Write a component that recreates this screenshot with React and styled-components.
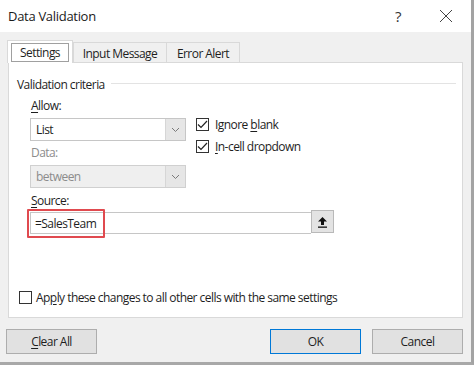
import React from "react";
import styled, { createGlobalStyle } from "styled-components";

const Global = createGlobalStyle`
  html, body { margin: 0; padding: 0; background: #ffffff; }
  body { font-family: "Open Sans", "Noto Sans", sans-serif; color: #1e1e1e; letter-spacing: -0.55px; }
  * { box-sizing: border-box; }
`;

const Window = styled.div`
  width: 474px;
  height: 365px;
  display: flex;
  flex-direction: column;
  background: #f0f0f0;
  border-right: 3px solid #a3a3a3;
  border-bottom: 3px solid #a8a8a8;
  overflow: hidden;
`;

const TitleBar = styled.div`
  height: 32px;
  flex: none;
  background: #ffffff;
  display: flex;
  align-items: center;
  padding-left: 8px;
`;

const Title = styled.div`
  flex: 1;
  font-size: 13px;
  letter-spacing: -0.3px;
  color: #1a1a1a;
`;

const TitleButton = styled.div`
  width: ${(p) => p.$w}px;
  height: 32px;
  display: flex;
  align-items: center;
  justify-content: center;
  color: #333;
  font-size: 15px;
`;

const Body = styled.div`
  flex: 1;
  display: flex;
  flex-direction: column;
  padding: 8px 8px 0 7px;
`;

const Tabs = styled.div`
  display: flex;
  align-items: flex-end;
  height: 23px;
`;

const Tab = styled.div`
  height: ${(p) => (p.$active ? 23 : 21)}px;
  padding: ${(p) => (p.$active ? "2px 3px 1px" : "0")};
  background: ${(p) => (p.$active ? "#ffffff" : "#f0f0f0")};
  border: 1px solid #d9d9d9;
  border-bottom: none;
  margin-right: ${(p) => (p.$active ? 0 : -1)}px;
  position: relative;
  z-index: ${(p) => (p.$active ? 2 : 1)};
  display: flex;
  align-items: center;
  justify-content: center;
  font-size: 12px;
  color: #1e1e1e;
  width: ${(p) => p.$w}px;
`;

const Focus = styled.div`
  width: 100%;
  height: 100%;
  border: 1px solid #a0a0a0;
  display: flex;
  align-items: center;
  justify-content: center;
`;

const Panel = styled.div`
  position: relative;
  margin-left: 1px;
  height: 256px;
  background: #ffffff;
  border: 1px solid #d9d9d9;
  margin-top: -1px;
  z-index: 1;
  padding: 13px 0 0 8px;
  display: flex;
  flex-direction: column;
`;

const Group = styled.div`
  display: flex;
  align-items: center;
  gap: 6px;
  font-size: 12px;
  height: 16px;
  padding-right: 6px;
  &::after {
    content: "";
    flex: 1;
    height: 1px;
    margin-top: -1px;
    background: #e3e3e3;
  }
`;

const Criteria = styled.div`
  display: flex;
  gap: 10px;
  padding-left: 13px;
  margin-top: ${(p) => p.$mt}px;
`;

const Column = styled.div`
  display: flex;
  flex-direction: column;
  width: 156px;
`;

const Label = styled.div`
  font-size: 12px;
  height: 16px;
  line-height: 16px;
  margin: ${(p) => p.$m || "0"};
  color: ${(p) => (p.$disabled ? "#8c8c8c" : "#1e1e1e")};
  padding-left: 1px;
  u { text-decoration: underline; text-underline-offset: 2px; }
`;

const Select = styled.div`
  height: 23px;
  margin-top: 4px;
  border: 1px solid ${(p) => (p.$disabled ? "#d0d0d0" : "#c6c6c6")};
  background: ${(p) => (p.$disabled ? "#efefef" : "#ffffff")};
  display: flex;
  align-items: stretch;
  font-size: 12px;
  color: ${(p) => (p.$disabled ? "#8c8c8c" : "#1e1e1e")};
`;

const SelectText = styled.div`
  flex: 1;
  display: flex;
  align-items: center;
  padding-left: 5px;
`;

const Arrow = styled.div`
  width: 20px;
  background: #e6e6e6;
  border-left: 1px solid #d6d6d6;
  display: flex;
  align-items: center;
  justify-content: center;
`;

const Checks = styled.div`
  display: flex;
  flex-direction: column;
  gap: 8px;
  padding-top: 19px;
`;

const CheckRow = styled.label`
  display: flex;
  align-items: center;
  gap: 6px;
  font-size: 12px;
  height: 14px;
  u { text-decoration: underline; text-underline-offset: 2px; }
`;

const Box = styled.div`
  width: 13px;
  height: 13px;
  border: 1px solid #333;
  background: #fff;
  display: flex;
  align-items: center;
  justify-content: center;
  flex: none;
`;

const SourceRow = styled.div`
  position: relative;
  display: flex;
  margin-top: 3px;
  width: 304px;
`;

const Input = styled.div`
  flex: 1;
  height: 22px;
  border: 1px solid #c6c6c6;
  border-right: none;
  display: flex;
  align-items: center;
  padding-left: 4px;
  font-size: 12px;
`;

const PickButton = styled.div`
  width: 23px;
  height: 23px;
  margin-top: -2px;
  background: #e3e3e3;
  border: 1px solid #b9b9b9;
  display: flex;
  align-items: center;
  justify-content: center;
`;

const Highlight = styled.div`
  position: absolute;
  left: -3px;
  top: -3px;
  width: 78px;
  height: 29px;
  border: 2px solid #e04a4f;
  border-radius: 1px;
`;

const Spacer = styled.div`
  flex: 1;
`;

const ApplyRow = styled(CheckRow)`
  padding-left: 2px;
  gap: 4px;
  margin-bottom: 12px;
  height: 15px;
`;

const Footer = styled.div`
  display: flex;
  align-items: center;
  gap: 11px;
  padding-top: 11px;
  margin-left: -1px;
`;

const Button = styled.div`
  width: 91px;
  height: 25px;
  background: #e1e1e1;
  border: 1px solid ${(p) => (p.$primary ? "#0078d7" : "#adadad")};
  display: flex;
  align-items: center;
  justify-content: center;
  font-size: 12px;
  color: #1e1e1e;
  u { text-decoration: underline; text-underline-offset: 2px; }
`;

const Grow = styled.div`
  flex: 1;
`;

const Chevron = () => (
  <svg width="9" height="6" viewBox="0 0 9 6">
    <path d="M1 1 L4.5 4.5 L8 1" fill="none" stroke="#7a7a7a" strokeWidth="1" />
  </svg>
);

const Check = () => (
  <svg width="11" height="9" viewBox="0 0 11 9">
    <path d="M1 4.5 L4 7.5 L10 1" fill="none" stroke="#222" strokeWidth="1.2" />
  </svg>
);

export default function App() {
  return (
    <>
      <Global />
      <Window>
        <TitleBar>
          <Title>Data Validation</Title>
          <TitleButton $w={46}>?</TitleButton>
          <TitleButton $w={50}>
            <svg width="14" height="14" viewBox="0 0 14 14">
              <path d="M1 1 L13 13 M13 1 L1 13" stroke="#444" strokeWidth="1" />
            </svg>
          </TitleButton>
        </TitleBar>
        <Body>
          <Tabs>
            <Tab $active $w={66}>
              <Focus>Settings</Focus>
            </Tab>
            <Tab $w={94}>Input Message</Tab>
            <Tab $w={74}>Error Alert</Tab>
          </Tabs>
          <Panel>
            <Group>Validation criteria</Group>
            <Criteria $mt={6}>
              <Column>
                <Label>
                  <u>A</u>llow:
                </Label>
                <Select>
                  <SelectText>List</SelectText>
                  <Arrow>
                    <Chevron />
                  </Arrow>
                </Select>
                <Label $disabled $m="4px 0 0">
                  Data:
                </Label>
                <Select $disabled>
                  <SelectText>between</SelectText>
                  <Arrow>
                    <Chevron />
                  </Arrow>
                </Select>
              </Column>
              <Checks>
                <CheckRow>
                  <Box>
                    <Check />
                  </Box>
                  <span>
                    Ignore <u>b</u>lank
                  </span>
                </CheckRow>
                <CheckRow>
                  <Box>
                    <Check />
                  </Box>
                  <span>
                    <u>I</u>n-cell dropdown
                  </span>
                </CheckRow>
              </Checks>
            </Criteria>
            <Criteria $mt={5}>
              <Column>
                <Label>
                  <u>S</u>ource:
                </Label>
                <SourceRow>
                  <Input>=SalesTeam</Input>
                  <PickButton>
                    <svg width="11" height="12" viewBox="0 0 11 12">
                      <path d="M5.5 1 L10 5.5 L7 5.5 L7 9 L4 9 L4 5.5 L1 5.5 Z" fill="#111" />
                      <rect x="1" y="10.5" width="9" height="1.3" fill="#111" />
                    </svg>
                  </PickButton>
                  <Highlight />
                </SourceRow>
              </Column>
            </Criteria>
            <Spacer />
            <ApplyRow>
              <Box />
              <span>
                Ap<u>p</u>ly these changes to all other cells with the same settings
              </span>
            </ApplyRow>
          </Panel>
          <Footer>
            <Button>
              <span>
                <u>C</u>lear All
              </span>
            </Button>
            <Grow />
            <Button $primary>OK</Button>
            <Button>Cancel</Button>
          </Footer>
        </Body>
      </Window>
    </>
  );
}
